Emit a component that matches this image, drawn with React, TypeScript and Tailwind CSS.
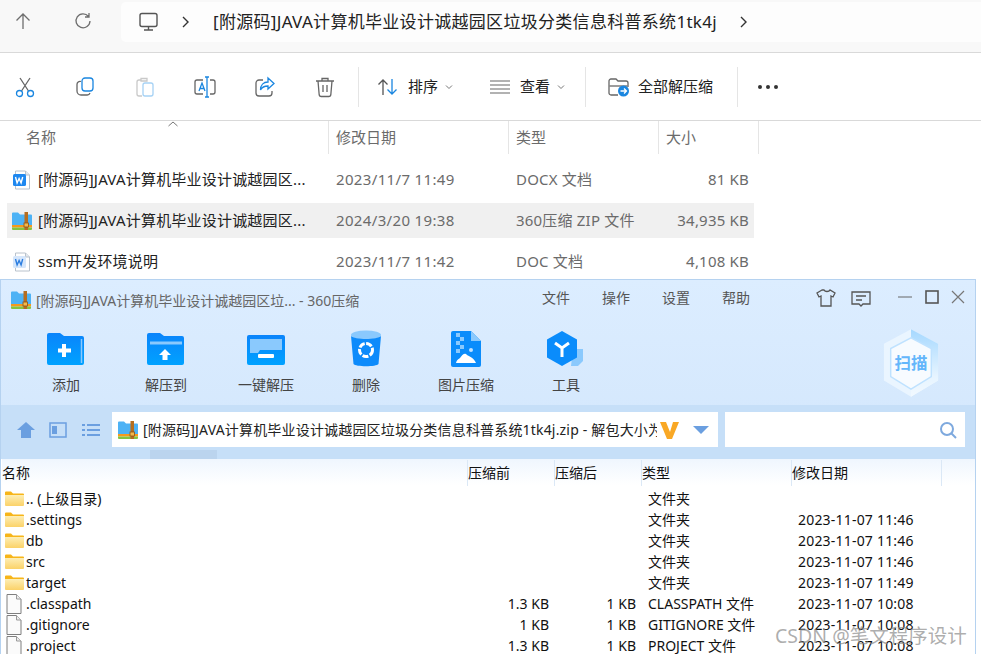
import type { ReactNode } from "react";

// Explorer window with the 360 archive window stacked over its lower half.

const ZIP_NAME = "[附源码]JAVA计算机毕业设计诚越园区垃圾分类信息科普系统1tk4j";

function ZipIcon({ size = 20 }: { size?: number }) {
  return (
    <svg width={size} height={size} viewBox="0 0 20 20" className="shrink-0">
      <path d="M0 2.500a1 1 0 0 1 1-1h5l2 2h11a1 1 0 0 1 1 1V14H0z" fill="#4db2f5" />
      <rect y="14" width="20" height="2.500" fill="#f59a1c" />
      <path d="M0 16.500h20V18a1 1 0 0 1-1 1H1a1 1 0 0 1-1-1z" fill="#85c341" />
      <rect x="12.500" y="1" width="3.500" height="18" fill="#b56d20" />
      <rect x="12" y="12" width="4.500" height="4" fill="#f2b84a" stroke="#8a5215" strokeWidth="0.800" />
    </svg>
  );
}

function WordIcon({ solid }: { solid?: boolean }) {
  return (
    <svg width="20" height="20" viewBox="0 0 20 20" className="shrink-0">
      <path d="M3.500 1h10l4 4v14h-14z" fill="#fff" stroke="#b9c2cc" />
      <path d="M13.500 1v4h4" fill="#e3e8ee" stroke="#b9c2cc" />
      <rect x="1" y="4" width="13" height="12" rx="1.500" fill={solid ? "#1e88f0" : "#d5e6fb"} />
      <path
        d="M3.500 7l1.600 6 2-4.500 2 4.500 1.600-6"
        fill="none"
        stroke={solid ? "#fff" : "#2b7de0"}
        strokeWidth="1.400"
      />
    </svg>
  );
}

function CmdIcon({ children }: { children: ReactNode }) {
  return (
    <svg width="22" height="22" viewBox="0 0 22 22" fill="none" strokeWidth="1.300">
      {children}
    </svg>
  );
}

function ExplorerRow({
  icon,
  name,
  date,
  type,
  size,
  selected,
}: {
  icon: ReactNode;
  name: string;
  date: string;
  type: string;
  size: string;
  selected?: boolean;
}) {
  return (
    <div
      className={`ml-[7px] mb-[6px] grid h-[35px] w-[747px] grid-cols-[329px_180px_150px_1fr] items-center text-[15px] text-[#6b6b6b] ${
        selected ? "bg-[#f0f0f0]" : ""
      }`}
    >
      <div className="flex items-center gap-[6px] pl-[5px] text-[#222]">
        {icon}
        <span className="whitespace-nowrap tracking-[0.200px]">{name}</span>
      </div>
      <span className="tracking-[0.350px]">{date}</span>
      <span className="tracking-[0.200px]">{type}</span>
      <span className="pr-[5px] text-right tracking-[0.200px]">{size}</span>
    </div>
  );
}

function BlueFolder({ children, tab }: { children: ReactNode; tab?: boolean }) {
  return (
    <svg width="40" height="34" viewBox="0 0 40 34">
      <defs>
        <linearGradient id="bf" x1="0" y1="0" x2="0" y2="1">
          <stop offset="0" stopColor="#0a84fb" />
          <stop offset="1" stopColor="#00a2ff" />
        </linearGradient>
      </defs>
      <path
        d={
          tab
            ? "M1 3a2 2 0 0 1 2-2h11l4 3h18a2 2 0 0 1 2 2v25a2 2 0 0 1-2 2H3a2 2 0 0 1-2-2z"
            : "M1 5a2 2 0 0 1 2-2h34a2 2 0 0 1 2 2v26a2 2 0 0 1-2 2H3a2 2 0 0 1-2-2z"
        }
        fill="url(#bf)"
      />
      {children}
    </svg>
  );
}

function ToolItem({ label, children }: { label: string; children: ReactNode }) {
  return (
    <div className="flex w-[100px] flex-col items-center">
      <div className="flex h-[42px] items-center justify-center">{children}</div>
      <span className="mt-[6px] text-[14px] leading-[18px] text-[#444]">{label}</span>
    </div>
  );
}

function YellowFolder() {
  return (
    <svg width="19" height="15" viewBox="0 0 19 15" className="shrink-0">
      <defs>
        <linearGradient id="yf" x1="0" y1="0" x2="0" y2="1">
          <stop offset="0" stopColor="#fdeeb5" />
          <stop offset="1" stopColor="#fbd268" />
        </linearGradient>
      </defs>
      <path d="M0 1.500a1 1 0 0 1 1-1h5l2 2h10a1 1 0 0 1 1 1V5H0z" fill="#f7b519" />
      <path d="M0 4h19v10a1 1 0 0 1-1 1H1a1 1 0 0 1-1-1z" fill="url(#yf)" />
    </svg>
  );
}

function PlainFile() {
  return (
    <svg width="16" height="20" viewBox="0 0 16 20" className="ml-[1px] mr-[2px] shrink-0">
      <path d="M1 .500h9.500l4.500 4.500v14.500H1z" fill="#fbfbfb" stroke="#7f7f7f" />
      <path d="M10.500 .500V5H15" fill="#eee" stroke="#9a9a9a" />
    </svg>
  );
}

const files: { name: string; before: string; after: string; type: string; date: string; folder: boolean }[] = [
  { name: ".. (上级目录)", before: "", after: "", type: "文件夹", date: "", folder: true },
  { name: ".settings", before: "", after: "", type: "文件夹", date: "2023-11-07 11:46", folder: true },
  { name: "db", before: "", after: "", type: "文件夹", date: "2023-11-07 11:46", folder: true },
  { name: "src", before: "", after: "", type: "文件夹", date: "2023-11-07 11:46", folder: true },
  { name: "target", before: "", after: "", type: "文件夹", date: "2023-11-07 11:49", folder: true },
  { name: ".classpath", before: "1.3 KB", after: "1 KB", type: "CLASSPATH 文件", date: "2023-11-07 10:08", folder: false },
  { name: ".gitignore", before: "1 KB", after: "1 KB", type: "GITIGNORE 文件", date: "2023-11-07 10:08", folder: false },
  { name: ".project", before: "1.3 KB", after: "1 KB", type: "PROJECT 文件", date: "2023-11-07 10:08", folder: false },
];

export default function App() {
  return (
    <div className="relative h-[654px] w-[981px] overflow-hidden bg-white font-['Noto_Sans','Noto_Sans_CJK_SC',sans-serif]">
      {/* address bar */}
      <div className="flex h-[53px] items-start border-b border-[#d9d9d9] bg-[#f8f8f8] pt-[2px]">
        <div className="flex w-[121px] items-center pt-[9px]">
          <svg width="20" height="20" viewBox="0 0 20 20" fill="none" stroke="#6e6e6e" strokeWidth="1.300" className="ml-[13px]">
            <path d="M10 18V3M3.500 9.500 10 3l6.500 6.500" />
          </svg>
          <svg width="20" height="20" viewBox="0 0 20 20" fill="none" stroke="#6e6e6e" strokeWidth="1.300" className="ml-[40px]">
            <path d="M15.500 5.500A7 7 0 1 0 17 10M16 2v4h-4" />
          </svg>
        </div>
        <div className="flex h-[40px] flex-1 items-center rounded-l-[5px] bg-[#fdfdfd] text-[#222]">
          <svg width="22" height="22" viewBox="0 0 22 22" fill="none" stroke="#555" strokeWidth="1.400" className="ml-[17px]">
            <rect x="2" y="2.500" width="17" height="13" rx="2" />
            <path d="M10.500 15.500v3M6 19h9" />
          </svg>
          <svg width="10" height="14" viewBox="0 0 10 14" fill="none" stroke="#333" strokeWidth="1.400" className="ml-[21px]">
            <path d="M2 2l5 5-5 5" />
          </svg>
          <span className="ml-[22px] whitespace-nowrap text-[17px] tracking-[0.300px]">{ZIP_NAME}</span>
          <svg width="10" height="14" viewBox="0 0 10 14" fill="none" stroke="#333" strokeWidth="1.400" className="ml-[22px]">
            <path d="M2 2l5 5-5 5" />
          </svg>
        </div>
      </div>

      {/* command bar */}
      <div className="flex h-[68px] items-center border-b border-[#d9d9d9] pl-[14px] text-[15px] text-[#222]">
        <div className="flex w-[344px] items-center gap-[38px]">
          <CmdIcon>
            <path d="M6 2l8.500 13M16 2 7.500 15" stroke="#666" />
            <circle cx="5.500" cy="17.500" r="3" stroke="#1a86e0" />
            <circle cx="16.500" cy="17.500" r="3" stroke="#1a86e0" />
          </CmdIcon>
          <CmdIcon>
            <rect x="8" y="2" width="11" height="13" rx="3" stroke="#1a86e0" />
            <path d="M7 5.500a3 3 0 0 0-4 3V15a4 4 0 0 0 4 4h6a3 3 0 0 0 3-2" stroke="#666" />
          </CmdIcon>
          <CmdIcon>
            <path d="M7 4H5a2 2 0 0 0-2 2v12a2 2 0 0 0 2 2h3M7 2.500h6V5H7z" stroke="#c9c9c9" />
            <rect x="9" y="7" width="10" height="13" rx="2" stroke="#a6d2f5" />
          </CmdIcon>
          <CmdIcon>
            <path d="M9 4H3a2 2 0 0 0-2 2v10a2 2 0 0 0 2 2h6M16 4h3a2 2 0 0 1 2 2v10a2 2 0 0 1-2 2h-3" stroke="#666" />
            <path d="M11 1h4M13 1v20M11 21h4M5 15l3-8 3 8M6 12.500h4" stroke="#1a86e0" />
          </CmdIcon>
          <CmdIcon>
            <path d="M9 4H5a3 3 0 0 0-3 3v10a3 3 0 0 0 3 3h10a3 3 0 0 0 3-3v-2" stroke="#666" />
            <path d="M14 2l6 5.500-6 5.500V10c-4 0-6 1-7.500 4 0-5 3-8 7.500-8z" stroke="#1a86e0" />
          </CmdIcon>
          <CmdIcon>
            <path d="M2 5h18M8 5V2.500h6V5M4 5l1.200 14a2 2 0 0 0 2 1.500h7.600a2 2 0 0 0 2-1.500L18 5M9 9v7M13 9v7" stroke="#666" />
          </CmdIcon>
        </div>
        <div className="h-[40px] w-px bg-[#e5e5e5]" />
        <div className="flex w-[112px] items-center pl-[18px]">
          <svg width="22" height="20" viewBox="0 0 22 20" fill="none" strokeWidth="1.300">
            <path d="M6 18V3M1.500 7.500 6 3l4.500 4.500" stroke="#555" />
            <path d="M15 2v15M10.500 12.500 15 17l4.500-4.500" stroke="#1a86e0" />
          </svg>
          <span className="ml-[9px]">排序</span>
          <svg width="8" height="6" viewBox="0 0 8 6" fill="none" stroke="#777" className="ml-[7px]">
            <path d="M1 1.500l3 3 3-3" />
          </svg>
        </div>
        <div className="flex w-[114px] items-center pl-[19px]">
          <svg width="20" height="14" viewBox="0 0 20 14" fill="none" stroke="#666" strokeWidth="1.200">
            <path d="M0 1h20M0 5h20M0 9h20M0 13h20" />
          </svg>
          <span className="ml-[10px]">查看</span>
          <svg width="8" height="6" viewBox="0 0 8 6" fill="none" stroke="#777" className="ml-[7px]">
            <path d="M1 1.500l3 3 3-3" />
          </svg>
        </div>
        <div className="h-[40px] w-px bg-[#e5e5e5]" />
        <div className="flex w-[151px] items-center pl-[22px]">
          <svg width="22" height="20" viewBox="0 0 22 20" fill="none">
            <path d="M10 18H3a2 2 0 0 1-2-2V4a2 2 0 0 1 2-2h5l2 2h8a2 2 0 0 1 2 2v4" stroke="#666" strokeWidth="1.300" />
            <path d="M1.500 9h18" stroke="#666" strokeWidth="1.300" />
            <circle cx="15.500" cy="14" r="5.500" fill="#1a86e0" />
            <path d="M12.500 14h6M16 11.500l2.500 2.500-2.500 2.500" stroke="#fff" strokeWidth="1.300" />
          </svg>
          <span className="ml-[8px]">全部解压缩</span>
        </div>
        <div className="h-[40px] w-px bg-[#e5e5e5]" />
        <div className="ml-[20px] flex gap-[4px]">
          <span className="h-[4px] w-[4px] rounded-full bg-[#333]" />
          <span className="h-[4px] w-[4px] rounded-full bg-[#333]" />
          <span className="h-[4px] w-[4px] rounded-full bg-[#333]" />
        </div>
      </div>

      {/* explorer column heads */}
      <div className="relative grid h-[33px] w-[759px] grid-cols-[329px_180px_150px_100px] text-[15px] text-[#6b6b6b]">
        <div className="flex items-center border-r border-[#e5e5e5] pl-[26px]">名称</div>
        <div className="flex items-center border-r border-[#e5e5e5] pl-[7px]">修改日期</div>
        <div className="flex items-center border-r border-[#e5e5e5] pl-[7px]">类型</div>
        <div className="flex items-center border-r border-[#e5e5e5] pl-[7px]">大小</div>
        <svg width="12" height="6" viewBox="0 0 12 6" fill="none" stroke="#777" className="absolute left-[167px] top-0">
          <path d="M1.500 5 6 1l4.500 4" />
        </svg>
      </div>
      <div className="h-[8px]" />
      <ExplorerRow icon={<WordIcon solid />} name="[附源码]JAVA计算机毕业设计诚越园区..." date="2023/11/7 11:49" type="DOCX 文档" size="81 KB" />
      <ExplorerRow icon={<ZipIcon />} name="[附源码]JAVA计算机毕业设计诚越园区..." date="2024/3/20 19:38" type="360压缩 ZIP 文件" size="34,935 KB" selected />
      <ExplorerRow icon={<WordIcon />} name="ssm开发环境说明" date="2023/11/7 11:42" type="DOC 文档" size="4,108 KB" />

      {/* 360 archive window */}
      <div className="absolute left-0 top-[279px] flex h-[375px] w-[976px] flex-col overflow-hidden border-x border-t border-[#b5d2f0] bg-gradient-to-b from-[#dcedff] to-[#c9e0f9]">
        <div className="flex h-[40px] shrink-0 items-center pl-[10px] pr-[10px] text-[14px] text-[#666]">
          <ZipIcon />
          <span className="ml-[5px] whitespace-nowrap">[附源码]JAVA计算机毕业设计诚越园区垃... - 360压缩</span>
          <div className="ml-auto flex gap-[32px] pb-[6px] text-[#555]">
            <span>文件</span>
            <span>操作</span>
            <span>设置</span>
            <span>帮助</span>
          </div>
          <svg width="22" height="22" viewBox="0 0 22 22" fill="none" stroke="#555" strokeWidth="1.300" className="ml-[65px] mb-[4px]">
            <path d="M7 3 2 6l2 4 2-1v10h10V9l2 1 2-4-5-3c-1 2-5 2-6 0z" />
          </svg>
          <svg width="20" height="16" viewBox="0 0 20 16" fill="none" stroke="#555" strokeWidth="1.300" className="ml-[14px] mb-[3px]">
            <path d="M1 1h18v12h-7l-2 2-2-2H1zM5 5h10M5 9h6" />
          </svg>
          <svg width="14" height="14" viewBox="0 0 14 14" stroke="#666" className="ml-[27px] mb-[6px]">
            <path d="M0 7h14" />
          </svg>
          <svg width="14" height="14" viewBox="0 0 14 14" fill="none" stroke="#555" strokeWidth="1.600" className="ml-[13px] mb-[6px]">
            <rect x="1" y="1" width="12" height="12" />
          </svg>
          <svg width="14" height="14" viewBox="0 0 14 14" stroke="#777" strokeWidth="1.200" className="ml-[12px] mb-[6px]">
            <path d="M1 1l12 12M13 1 1 13" />
          </svg>
        </div>

        <div className="flex h-[85px] shrink-0 items-start pl-[15px] pt-[8px]">
          <ToolItem label="添加">
            <BlueFolder tab>
              <path d="M35.500 7v24" stroke="#8ac9fd" strokeWidth="1.500" />
              <path d="M18 12v13M12 18.500h13" stroke="#fff" strokeWidth="4" />
            </BlueFolder>
          </ToolItem>
          <ToolItem label="解压到">
            <BlueFolder tab>
              <path d="M4 11h32" stroke="#8ac9fd" strokeWidth="3" />
              <path d="M19 17l6 6h-3.500v5h-5v-5H13z" fill="#fff" />
            </BlueFolder>
          </ToolItem>
          <ToolItem label="一键解压">
            <BlueFolder>
              <path d="M4 7h32v11H14l-2 3H4z" fill="#8ac9fd" />
              <rect x="12" y="22" width="16" height="4" rx="1" fill="#fff" />
            </BlueFolder>
          </ToolItem>
          <ToolItem label="删除">
            <svg width="32" height="38" viewBox="0 0 32 38">
              <ellipse cx="16" cy="5" rx="15" ry="4.500" fill="#8ac9fd" />
              <path d="M1 6c4 4 26 4 30 0l-2.500 28c-2 3-23 3-25 0z" fill="#0d8bfb" />
              <circle cx="16" cy="20" r="6.500" fill="none" stroke="#fff" strokeWidth="3" strokeDasharray="6 1.500" />
            </svg>
          </ToolItem>
          <ToolItem label="图片压缩">
            <svg width="30" height="36" viewBox="0 0 30 36">
              <path d="M2 0h18l10 10v24a2 2 0 0 1-2 2H2a2 2 0 0 1-2-2V2a2 2 0 0 1 2-2z" fill="#0a8cfb" />
              <path d="M20 0l10 10H20z" fill="#8ac9fd" />
              <path d="M5 2h4v4H5zM9 6h4v4H9zM5 10h4v4H5zM9 14h4v4H9zM5 18h4v4H5z" fill="#8ac9fd" />
              <path d="M5 32c1-4 3-4 4-5 2-3 5-6 7-3 2 1 7 3 9 8z" fill="#fff" />
              <circle cx="20" cy="19" r="2" fill="#bfe1ff" />
            </svg>
          </ToolItem>
          <ToolItem label="工具">
            <svg width="38" height="36" viewBox="0 0 38 36">
              <path d="M26 18h10v12l-5 5h-7z" fill="#8ac9fd" />
              <path d="M15 0l15 8.500v18L15 35 0 26.500v-18z" fill="#0a8cfb" />
              <path d="M8 12l7 5 7-5M15 17v9" fill="none" stroke="#fff" strokeWidth="3" />
            </svg>
          </ToolItem>
          <div className="ml-auto mr-[35px] mt-[-1px] flex h-[72px] w-[58px] items-center justify-center">
            <svg width="58" height="72" viewBox="0 0 60 72">
              <defs>
                <linearGradient id="hex" x1="0" y1="0" x2="0" y2="1">
                  <stop offset="0" stopColor="#a5d8ff" />
                  <stop offset="0.700" stopColor="#e6f4ff" />
                  <stop offset="1" stopColor="#f2f9ff" />
                </linearGradient>
              </defs>
              <path d="M30 1l28 15v38L30 71 2 54V16z" fill="#eaf5ff" />
              <path d="M30 1l28 15v38L30 71z" fill="url(#hex)" />
              <path d="M30 10l21 11v29L30 63 9 50V21z" fill="#f7fbff" stroke="#bfe2ff" strokeWidth="1.500" />
              <text x="30" y="42" textAnchor="middle" fontSize="17" fontWeight="700" fill="#63b6fb">
                扫描
              </text>
            </svg>
          </div>
        </div>

        {/* path row */}
        <div className="h-[54px] shrink-0 bg-[#c6dff8]">
          <div className="flex items-start pt-[7px]">
            <div className="flex h-[35px] w-[111px] items-center pl-[16px]">
              <svg width="18" height="16" viewBox="0 0 18 16" fill="#6b9fe0">
                <path d="M9 0l9 8h-4v8H4V8H0z" />
              </svg>
              <svg width="18" height="16" viewBox="0 0 18 16" fill="none" stroke="#6b9fe0" strokeWidth="1.500" className="ml-[14px]">
                <rect x="1" y="1" width="16" height="14" />
                <rect x="3" y="4" width="5" height="8" fill="#6b9fe0" stroke="none" />
              </svg>
              <svg width="18" height="14" viewBox="0 0 18 14" stroke="#6b9fe0" strokeWidth="2" className="ml-[15px]">
                <path d="M0 2h3M5 2h13M0 7h3M5 7h13M0 12h3M5 12h13" />
              </svg>
            </div>
            <div className="flex h-[35px] w-[606px] items-center bg-white pl-[6px] text-[14px] text-[#222]">
              <ZipIcon />
              <span className="ml-[5px] w-[514px] overflow-hidden whitespace-nowrap tracking-[0.180px]">
                {ZIP_NAME}.zip - 解包大小为 1.2 MB
              </span>
              <svg width="20" height="20" viewBox="0 0 20 20" fill="#f9a825" className="ml-[3px] shrink-0">
                <path d="M0 2h6l4 10 3-10h6l-7 17H7z" />
              </svg>
              <svg width="16" height="8" viewBox="0 0 16 8" fill="#6b9fe0" className="ml-[13px]">
                <path d="M0 0h16l-8 8z" />
              </svg>
            </div>
            <div className="ml-[7px] flex h-[35px] w-[240px] items-center justify-end bg-white pr-[8px]">
              <svg width="18" height="18" viewBox="0 0 18 18" fill="none" stroke="#7ea9de" strokeWidth="2">
                <circle cx="8" cy="8" r="6" />
                <path d="M12.500 12.500 17 17" />
              </svg>
            </div>
          </div>
          <div className="ml-[149px] mt-[3px] h-[9px] w-[67px] bg-[#bbd4ee]" />
        </div>

        {/* archive contents */}
        <div className="flex-1 bg-white pl-[1px] text-[14px] text-[#111]">
          <div className="grid h-[26px] grid-cols-[466px_87px_87px_150px_150px_1fr] bg-gradient-to-b from-[#eff6fe] to-white pt-[1px] text-[14px] leading-[26px]">
            <span className="border-r border-[#dbe8f6]">名称</span>
            <span className="border-r border-[#dbe8f6]">压缩前</span>
            <span className="border-r border-[#dbe8f6]">压缩后</span>
            <span className="border-r border-[#dbe8f6]">类型</span>
            <span className="border-r border-[#dbe8f6]">修改日期</span>
            <span />
          </div>
          <div className="pt-[3px]">
            {files.map((f) => (
              <div key={f.name} className="grid h-[21px] grid-cols-[464px_83px_87px_162px_1fr] items-center leading-[21px]">
                <div className="flex items-center gap-[2px] pl-[3px]">
                  {f.folder ? <YellowFolder /> : <PlainFile />}
                  <span className="whitespace-nowrap">{f.name}</span>
                </div>
                <span className="text-right">{f.before}</span>
                <span className="text-right">{f.after}</span>
                <span className="whitespace-nowrap pl-[12px]">{f.type}</span>
                <span className="whitespace-nowrap tracking-[0.200px]">{f.date}</span>
              </div>
            ))}
          </div>
        </div>
      </div>

      <span className="absolute left-[775px] top-[623px] text-[19.500px] leading-[26px] text-[#8a8a8a]/70">
        CSDN @笔文程序设计
      </span>
    </div>
  );
}
